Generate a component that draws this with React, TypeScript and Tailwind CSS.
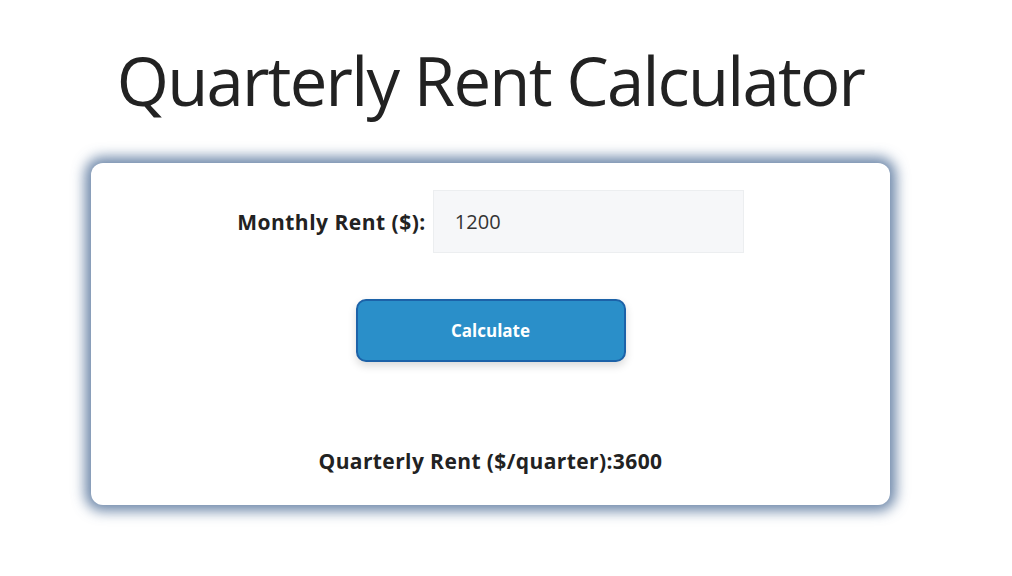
import React, { useState } from 'react';

const App: React.FC = () => {
  const [rent, setRent] = useState('1200');
  const [quarterly, setQuarterly] = useState<number | null>(3600);

  const calculate = () => {
    const v = parseFloat(rent);
    setQuarterly(isNaN(v) ? null : v * 3);
  };

  return (
    <div className="min-h-[576px] bg-white text-[#222] font-['Open_Sans',sans-serif]">
      <div className="w-[981px] flex flex-col items-center">
        {/* Title */}
        <h1 className="mt-[36px] text-[67px] leading-[88px] font-normal tracking-[-1.75px] text-[#222]">
          Quarterly Rent Calculator
        </h1>

        {/* Card */}
        <div className="mt-[39px] w-[799px] h-[342px] bg-white rounded-[12px] shadow-[0_0_13px_6px_rgba(60,95,140,0.75)] flex flex-col items-center">
          <div className="mt-[27px] flex items-center gap-[7px]">
            <label className="mt-[3px] text-[21px] font-bold tracking-[0.5px] text-[#222]">Monthly Rent ($):</label>
            <input
              value={rent}
              onChange={e => setRent(e.target.value)}
              className="w-[311px] h-[63px] bg-[#f6f7f9] border border-[#eceef0] px-[21px] text-[20px] text-[#333] outline-none"
            />
          </div>

          <button
            onClick={calculate}
            className="mt-[46px] w-[270px] h-[63px] rounded-[10px] bg-[#2a8fc9] border-2 border-[#1c62a8] text-white text-[17px] font-bold shadow-[0_4px_8px_rgba(0,0,0,0.15)]"
          >
            Calculate
          </button>

          <p className="mt-[84px] text-[21px] font-bold tracking-[0.4px] text-[#222]">
            Quarterly Rent ($/quarter):{quarterly ?? ''}
          </p>
        </div>
      </div>
    </div>
  );
};

export default App;
